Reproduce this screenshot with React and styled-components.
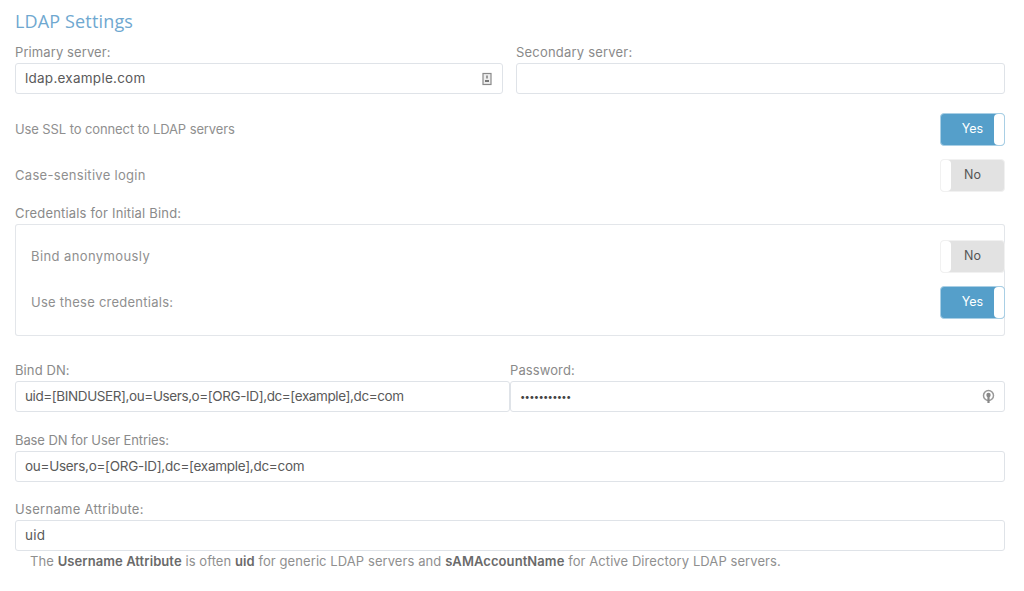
import React from 'react';
import styled, { createGlobalStyle } from 'styled-components';

const Global = createGlobalStyle`
  html, body { margin: 0; padding: 0; background: #fff; }
  body { font-family: "Inter", "Open Sans", sans-serif; }
`;

function App() {
  return (
    <Page>
      <Global />
      <Title>LDAP Settings</Title>
      <TwoCols $first="488px" $gap={13}>
        <Field>
          <Label>Primary server:</Label>
          <InputBox>
            <Value $track={0.25}>ldap.example.com</Value>
            <CardIcon />
          </InputBox>
        </Field>
        <Field>
          <Label $track={0.2}>Secondary server:</Label>
          <InputBox />
        </Field>
      </TwoCols>
      <SwitchRow $top={19}>
        <RowLabel $track={-0.1}>Use SSL to connect to LDAP servers</RowLabel>
        <Toggle on />
      </SwitchRow>
      <SwitchRow $top={13}>
        <RowLabel $track={0.3}>Case-sensitive login</RowLabel>
        <Toggle />
      </SwitchRow>
      <GroupLabel>Credentials for Initial Bind:</GroupLabel>
      <Group>
        <SwitchRow>
          <RowLabel $track={0.4}>Bind anonymously</RowLabel>
          <Toggle />
        </SwitchRow>
        <SwitchRow $top={13}>
          <RowLabel $track={0.25}>Use these credentials:</RowLabel>
          <Toggle on />
        </SwitchRow>
      </Group>
      <TwoCols $first="495px" $gap={0} $top={25}>
        <Field>
          <Label>Bind DN:</Label>
          <InputBox>
            <Value $track={-0.4}>uid=[BINDUSER],ou=Users,o=[ORG-ID],dc=[example],dc=com</Value>
          </InputBox>
        </Field>
        <Field>
          <Label>Password:</Label>
          <InputBox>
            <Dots>•••••••••••</Dots>
            <KeyIcon />
          </InputBox>
        </Field>
      </TwoCols>
      <Field $top={19}>
        <Label $track={-0.1}>Base DN for User Entries:</Label>
        <InputBox>
          <Value $track={-0.28}>ou=Users,o=[ORG-ID],dc=[example],dc=com</Value>
        </InputBox>
      </Field>
      <Field $top={18}>
        <Label $track={0.3}>Username Attribute:</Label>
        <InputBox>
          <Value $track={0.25}>uid</Value>
        </InputBox>
      </Field>
      <Help>
        The <b>Username Attribute</b> is often <b>uid</b> for generic LDAP servers and{' '}
        <b>sAMAccountName</b> for Active Directory LDAP servers.
      </Help>
    </Page>
  );
}

function Toggle({ on }) {
  return (
    <ToggleWrap $on={on}>
      <Knob $on={on} />
      <ToggleText $on={on}>{on ? 'Yes' : 'No'}</ToggleText>
    </ToggleWrap>
  );
}

function CardIcon() {
  return (
    <Icon width="12" height="14" viewBox="0 0 12 14">
      <rect x="2" y="1.5" width="8" height="11" fill="#eee" stroke="#8a8a8a" strokeWidth="1.2" />
      <rect x="5.3" y="3.5" width="1.4" height="3" fill="#777" />
      <rect x="4" y="8" width="4" height="2" fill="#777" />
    </Icon>
  );
}

function KeyIcon() {
  return (
    <Icon width="13" height="15" viewBox="0 0 13 15">
      <circle cx="6.5" cy="6.5" r="5" fill="none" stroke="#999" strokeWidth="1.5" />
      <circle cx="6.5" cy="6" r="2.2" fill="#888" />
      <rect x="5.4" y="7" width="2.2" height="7" fill="#888" />
    </Icon>
  );
}

export default App;

const Page = styled.div`
  padding: 11px 19px 0 15px;
  box-sizing: border-box;
  width: 1024px;
  height: 591px;
  overflow: hidden;
  color: #8f8f8f;
`;
const Title = styled.h1`
  margin: 0 0 12px;
  font-family: "Open Sans", sans-serif;
  font-weight: 400;
  font-size: 18px;
  line-height: 20px;
  letter-spacing: 0.15px;
  color: #6fa8d0;
`;
const TwoCols = styled.div`
  display: grid;
  grid-template-columns: ${p => p.$first} 1fr;
  column-gap: ${p => p.$gap}px;
  margin-top: ${p => p.$top || 0}px;
`;
const Field = styled.div`
  margin-top: ${p => p.$top || 0}px;
`;
const Label = styled.div`
  font-size: 13px;
  line-height: 18px;
  padding-bottom: 2px;
  letter-spacing: ${p => p.$track ?? 0.1}px;
  color: #8a8a8a;
`;
const InputBox = styled.div`
  height: 31px;
  box-sizing: border-box;
  border: 1px solid #dfe3e8;
  border-radius: 3px;
  background: #fff;
  display: flex;
  align-items: center;
  justify-content: space-between;
  padding: 0 9px;
  font-size: 13.5px;
  color: #5a5a5a;
`;
const Value = styled.span`
  padding-bottom: 2px;
  letter-spacing: ${p => p.$track || 0}px;
`;
const Dots = styled.span`
  font-size: 9.5px;
  letter-spacing: -0.75px;
  color: #444;
`;
const Icon = styled.svg`
  display: block;
`;
const SwitchRow = styled.div`
  display: flex;
  justify-content: space-between;
  align-items: center;
  margin-top: ${p => p.$top || 0}px;
`;
const RowLabel = styled.div`
  font-size: 13px;
  padding-bottom: 2px;
  letter-spacing: ${p => p.$track || 0}px;
  color: #8f8f8f;
`;
const GroupLabel = styled.div`
  margin-top: 12px;
  font-size: 13px;
  line-height: 18px;
  padding-bottom: 2px;
  letter-spacing: 0.18px;
  color: #8a8a8a;
`;
const Group = styled.div`
  height: 112px;
  box-sizing: border-box;
  box-shadow: inset 0 0 0 1px #e3e6ea;
  border-radius: 3px;
  padding: 16px 0 0 16px;
`;
const ToggleWrap = styled.div`
  position: relative;
  width: 65px;
  height: 33px;
  box-sizing: border-box;
  border-radius: 4px;
  display: flex;
  align-items: center;
  overflow: hidden;
  background: ${p => (p.$on ? '#559fca' : '#e2e2e2')};
  border: 1px solid ${p => (p.$on ? '#a9cfe5' : '#f1f1f1')};
`;
const Knob = styled.div`
  position: absolute;
  top: 0;
  bottom: 0;
  ${p => (p.$on ? 'right: 0;' : 'left: 0;')}
  width: 10px;
  background: #fff;
  border-radius: ${p => (p.$on ? '4px 0 0 4px' : '0 4px 4px 0')};
`;
const ToggleText = styled.div`
  flex: 1;
  text-align: center;
  padding-bottom: 2px;
  font-size: 12.5px;
  color: ${p => (p.$on ? '#fff' : '#555')};
`;
const Help = styled.div`
  margin-top: 1px;
  padding-left: 15px;
  font-size: 13px;
  line-height: 18px;
  letter-spacing: 0.08px;
  color: #8f8f8f;
  b { color: #6a6a6a; font-weight: 600; }
`;
